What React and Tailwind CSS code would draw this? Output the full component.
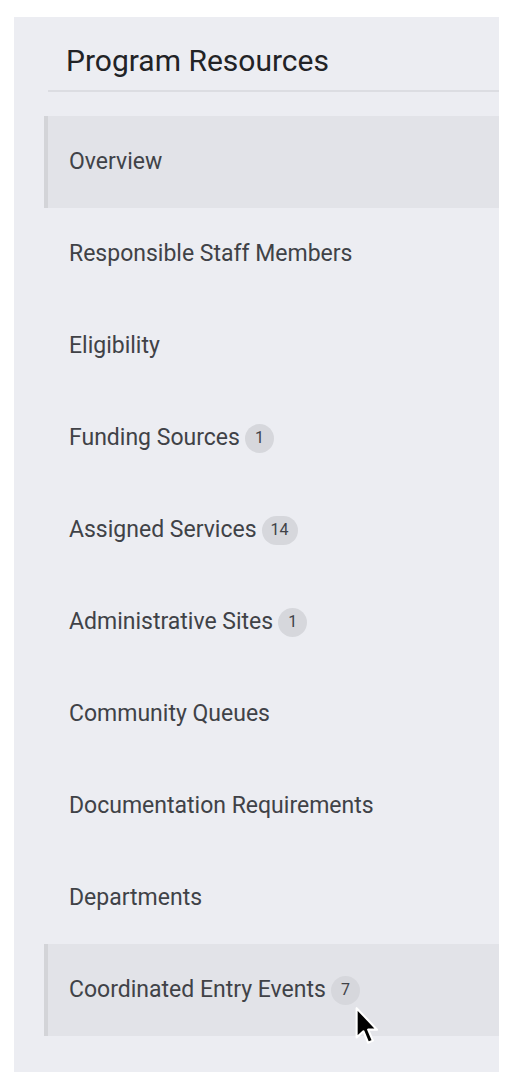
const items = [
  { label: "Overview", active: true },
  { label: "Responsible Staff Members" },
  { label: "Eligibility" },
  { label: "Funding Sources", count: 1 },
  { label: "Assigned Services", count: 14 },
  { label: "Administrative Sites", count: 1 },
  { label: "Community Queues" },
  { label: "Documentation Requirements" },
  { label: "Departments" },
  { label: "Coordinated Entry Events", count: 7, active: true },
];

const Cursor = () => (
  <svg
    className="absolute left-[350px] top-[1004px]"
    width="30"
    height="44"
    viewBox="0 0 28 42"
  >
    <path
      d="M6 4 L6 32 L12.5 26 L17 37 L21.5 35 L17 24.5 L25.5 24.5 Z"
      fill="#000"
      stroke="#fff"
      strokeWidth="2"
      strokeLinejoin="round"
    />
  </svg>
);

const NavItem = ({ item }) => (
  <div
    className={`flex h-[92px] items-center border-l-4 pl-[21px] ${
      item.active
        ? "border-[#d3d4d8] bg-[#e2e3e8]"
        : "border-transparent"
    }`}
  >
    <span className="text-[23px] text-[#404247]">{item.label}</span>
    {item.count != null && (
      <span className="ml-[5px] flex h-[29px] min-w-[29px] items-center justify-center rounded-full bg-[#d6d7dc] px-[9px] text-[16px] text-[#404247]">
        {item.count}
      </span>
    )}
  </div>
);

export default function App() {
  return (
    <div
      className="relative min-h-[1088px] bg-white pt-[17px] pl-[14px]"
      style={{ fontFamily: "Roboto, 'Liberation Sans', sans-serif" }}
    >
      <div className="h-[1055px] w-[485px] bg-[#ecedf2] pl-[30px]">
        <div className="ml-[4px] border-b-2 border-[#dcdde2] pt-[26px] pb-[11px] pl-[18px]">
          <h2 className="text-[30px] leading-[36px] text-[#222326]">
            Program Resources
          </h2>
        </div>
        <nav className="mt-[24px]">
          {items.map((item) => (
            <NavItem key={item.label} item={item} />
          ))}
        </nav>
      </div>
      <Cursor />
    </div>
  );
}
